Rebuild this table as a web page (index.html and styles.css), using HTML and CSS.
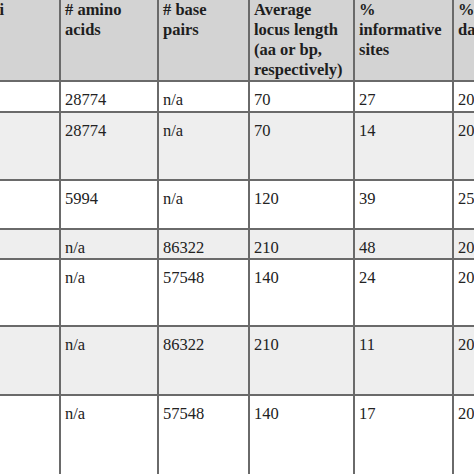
FILE: index.html
```html
<!DOCTYPE html>
<html>
<head>
<meta charset="utf-8">
<link rel="stylesheet" href="styles.css">
</head>
<body>
<table class="data">
  <colgroup>
    <col class="c1"><col class="c2"><col class="c3"><col class="c4"><col class="c5"><col class="c6">
  </colgroup>
  <thead>
    <tr class="head">
      <th># loci</th>
      <th># amino acids</th>
      <th># base pairs</th>
      <th>Average locus length (aa or bp, respectively)</th>
      <th>% informative sites</th>
      <th>% data</th>
    </tr>
  </thead>
  <tbody>
    <tr class="r1"><td></td><td>28774</td><td>n/a</td><td>70</td><td>27</td><td>20.3</td></tr>
    <tr class="r2 alt"><td></td><td>28774</td><td>n/a</td><td>70</td><td>14</td><td>20.3</td></tr>
    <tr class="r3"><td></td><td>5994</td><td>n/a</td><td>120</td><td>39</td><td>25.4</td></tr>
    <tr class="r4 alt"><td></td><td>n/a</td><td>86322</td><td>210</td><td>48</td><td>20.3</td></tr>
    <tr class="r5"><td></td><td>n/a</td><td>57548</td><td>140</td><td>24</td><td>20.3</td></tr>
    <tr class="r6 alt"><td></td><td>n/a</td><td>86322</td><td>210</td><td>11</td><td>20.3</td></tr>
    <tr class="r7"><td></td><td>n/a</td><td>57548</td><td>140</td><td>17</td><td>20.3</td></tr>
  </tbody>
</table>
</body>
</html>
```
FILE: styles.css
```css
html, body {
  margin: 0;
  padding: 0;
  background: #ffffff;
  overflow: hidden;
}
.data {
  border-collapse: collapse;
  table-layout: fixed;
  width: 531px;
  margin-left: -39px;
  margin-top: -4px;
  font-family: "Liberation Serif", "Times New Roman", serif;
  font-size: 16.5px;
  line-height: 20px;
  color: #222;
}
.c1 { width: 98px; }
.c2 { width: 98px; }
.c3 { width: 91px; }
.c4 { width: 105px; }
.c5 { width: 99px; }
.c6 { width: 40px; }
.data th, .data td {
  border: 2px solid #6a6a6a;
  text-align: left;
  vertical-align: top;
  padding: 8px 4px 0 4px;
  overflow: hidden;
  white-space: normal;
}
.data th {
  font-weight: bold;
  color: #1e1e1e;
  padding-top: 2px;
}
.head { background: #d3d3d3; }
.alt { background: #eeeeee; }
.r1 { height: 31px; }
.r2 { height: 68px; }
.r3 { height: 49px; }
.r4 { height: 28px; }
.r5 { height: 67px; }
.r6 { height: 69px; }
.r7 { height: 90px; }
```
